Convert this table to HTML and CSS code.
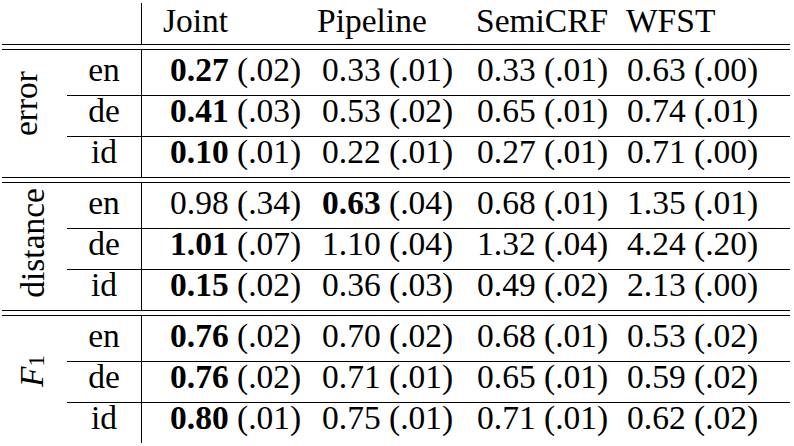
FILE: index.html
```html
<!DOCTYPE html>
<html lang="en">
<head>
<meta charset="utf-8">
<title>Results table</title>
<link rel="stylesheet" href="styles.css">
</head>
<body>
<div class="tbl">
  <div class="hdr">
    <div class="hc"></div>
    <div class="hc hsep"></div>
    <div class="hc c3">Joint</div>
    <div class="hc c4">Pipeline</div>
    <div class="hc c5">SemiCRF</div>
    <div class="hc c6">WFST</div>
  </div>
  <div class="dbl"></div>

  <div class="grp">
    <div class="glabel"><span class="rot rot-error">error</span></div>
    <div class="rows">
      <div class="row first">
        <div class="lang">en</div>
        <div class="d3"><b>0.27</b> (.02)</div>
        <div class="d4">0.33 (.01)</div>
        <div class="d5">0.33 (.01)</div>
        <div class="d6">0.63 (.00)</div>
      </div>
      <div class="row">
        <div class="lang">de</div>
        <div class="d3"><b>0.41</b> (.03)</div>
        <div class="d4">0.53 (.02)</div>
        <div class="d5">0.65 (.01)</div>
        <div class="d6">0.74 (.01)</div>
      </div>
      <div class="row last">
        <div class="lang">id</div>
        <div class="d3"><b>0.10</b> (.01)</div>
        <div class="d4">0.22 (.01)</div>
        <div class="d5">0.27 (.01)</div>
        <div class="d6">0.71 (.00)</div>
      </div>
    </div>
  </div>
  <div class="dbl"></div>

  <div class="grp">
    <div class="glabel"><span class="rot rot-distance">distance</span></div>
    <div class="rows">
      <div class="row first">
        <div class="lang">en</div>
        <div class="d3">0.98 (.34)</div>
        <div class="d4"><b>0.63</b> (.04)</div>
        <div class="d5">0.68 (.01)</div>
        <div class="d6">1.35 (.01)</div>
      </div>
      <div class="row">
        <div class="lang">de</div>
        <div class="d3"><b>1.01</b> (.07)</div>
        <div class="d4">1.10 (.04)</div>
        <div class="d5">1.32 (.04)</div>
        <div class="d6">4.24 (.20)</div>
      </div>
      <div class="row last">
        <div class="lang">id</div>
        <div class="d3"><b>0.15</b> (.02)</div>
        <div class="d4">0.36 (.03)</div>
        <div class="d5">0.49 (.02)</div>
        <div class="d6">2.13 (.00)</div>
      </div>
    </div>
  </div>
  <div class="dbl"></div>

  <div class="grp">
    <div class="glabel"><span class="rot rot-f1"><span class="it">F</span><span class="sub">1</span></span></div>
    <div class="rows">
      <div class="row first">
        <div class="lang">en</div>
        <div class="d3"><b>0.76</b> (.02)</div>
        <div class="d4">0.70 (.02)</div>
        <div class="d5">0.68 (.01)</div>
        <div class="d6">0.53 (.02)</div>
      </div>
      <div class="row">
        <div class="lang">de</div>
        <div class="d3"><b>0.76</b> (.02)</div>
        <div class="d4">0.71 (.01)</div>
        <div class="d5">0.65 (.01)</div>
        <div class="d6">0.59 (.02)</div>
      </div>
      <div class="row last">
        <div class="lang">id</div>
        <div class="d3"><b>0.80</b> (.01)</div>
        <div class="d4">0.75 (.01)</div>
        <div class="d5">0.71 (.01)</div>
        <div class="d6">0.62 (.02)</div>
      </div>
    </div>
  </div>
</div>
</body>
</html>
```

FILE: styles.css
```css
* { box-sizing: border-box; }

body {
  margin: 0;
  background: #fff;
  color: #000;
  font-family: "Liberation Serif", "Times New Roman", serif;
  font-size: 33.5px;
}

.tbl {
  width: 788px;
  margin-left: 2px;
}

.hdr {
  display: grid;
  grid-template-columns: 65px 75px 171px 155px 151px 171px;
  height: 44px;
}

.hc {
  padding-top: 6px;
  line-height: 30px;
  white-space: nowrap;
}

.hsep {
  margin-top: 3px;
  border-right: 1px solid #000;
}

.c3 { padding-left: 21px; }
.c4 { padding-left: 4px; }
.c5 { padding-left: 8px; }
.c6 { padding-left: 7px; }

.dbl {
  height: 6px;
  border-top: 1px solid #000;
  border-bottom: 1px solid #000;
}

.grp {
  display: flex;
}

.glabel {
  width: 65px;
  flex: none;
  display: flex;
  align-items: center;
}

.rot {
  writing-mode: vertical-rl;
  transform: rotate(180deg);
  line-height: 30px;
  white-space: nowrap;
}

.rot-error { margin-left: 9px; margin-bottom: 19px; }
.rot-distance { margin-left: 16px; margin-bottom: 7px; }
.rot-f1 { margin-left: 15px; margin-bottom: 17px; }

.it { font-style: italic; }

.sub {
  font-size: 23px;
  line-height: 0;
  vertical-align: -5px;
}

.rows {
  flex: 1;
}

.row {
  display: grid;
  grid-template-columns: 75px 171px 155px 151px 171px;
  height: 41px;
  border-bottom: 1px solid #000;
  line-height: 30px;
  white-space: nowrap;
}

.row.first { height: 46px; }
.row.first > div { padding-top: 5px; }

.row.last {
  height: 40px;
  border-bottom: 0;
}

.lang {
  text-align: center;
  border-right: 1px solid #000;
}

.row b { font-weight: bold; }

.d3 { padding-left: 28px; }
.d4 { padding-left: 9px; }
.d5 { padding-left: 9px; }
.d6 { padding-left: 8px; }
```
